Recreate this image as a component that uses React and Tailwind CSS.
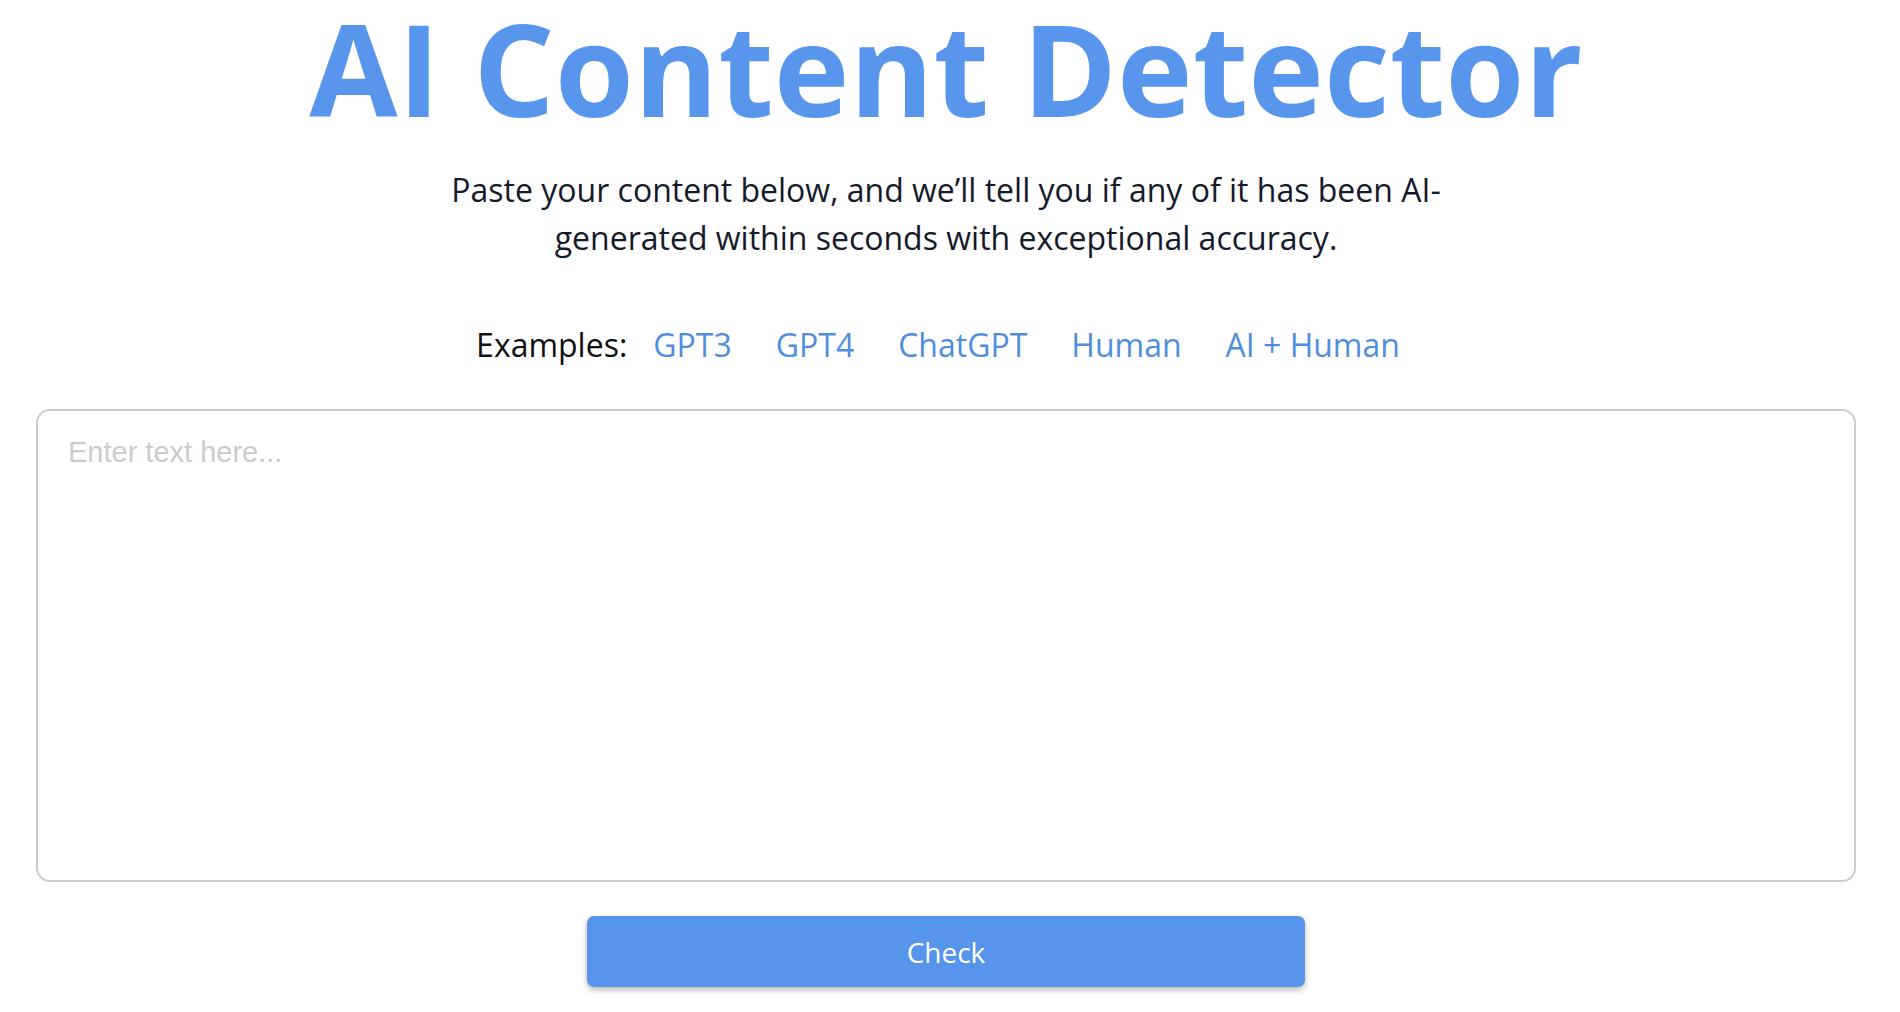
export default function App() {
  const examples = ["GPT3", "GPT4", "ChatGPT", "Human", "AI + Human"];
  return (
    <div
      className="w-[1892px] min-h-[1012px] bg-white flex flex-col items-center"
      style={{ fontFamily: '"Open Sans", "Noto Sans", sans-serif' }}
    >
      <h1 className="pt-[4px] text-[128px] leading-none font-bold text-[#5796ec] whitespace-nowrap">
        AI Content Detector
      </h1>

      <p className="mt-[34px] text-[32px] leading-[48px] text-[#151a2b] text-center">
        Paste your content below, and we’ll tell you if any of it has been AI-
        <br />
        generated within seconds with exceptional accuracy.
      </p>

      <div className="mt-[59px] pr-[16px] flex items-center text-[32px] leading-[48px]">
        <span className="text-[#111111]">Examples:</span>
        <div className="ml-[26px] flex items-center gap-[44px]">
          {examples.map((e) => (
            <button key={e} className="text-[#4f8edc] cursor-pointer">
              {e}
            </button>
          ))}
        </div>
      </div>

      <div className="mt-[40px] self-stretch pl-[36px] pr-[36px]">
        <textarea
          placeholder="Enter text here..."
          className="block w-full h-[473px] resize-none border-2 border-[#cccccc] rounded-[14px] pt-[20px] pl-[30px] pr-[30px] text-[29px] text-[#222] placeholder:text-[#cbcbcb] outline-none"
          style={{ fontFamily: '"Liberation Sans", Arial, sans-serif' }}
        />
      </div>

      <button className="mt-[34px] w-[718px] h-[71px] rounded-[7px] bg-[#5695eb] text-white text-[28px] shadow-[0_3px_6px_rgba(0,0,0,0.28)]">
        Check
      </button>
    </div>
  );
}
